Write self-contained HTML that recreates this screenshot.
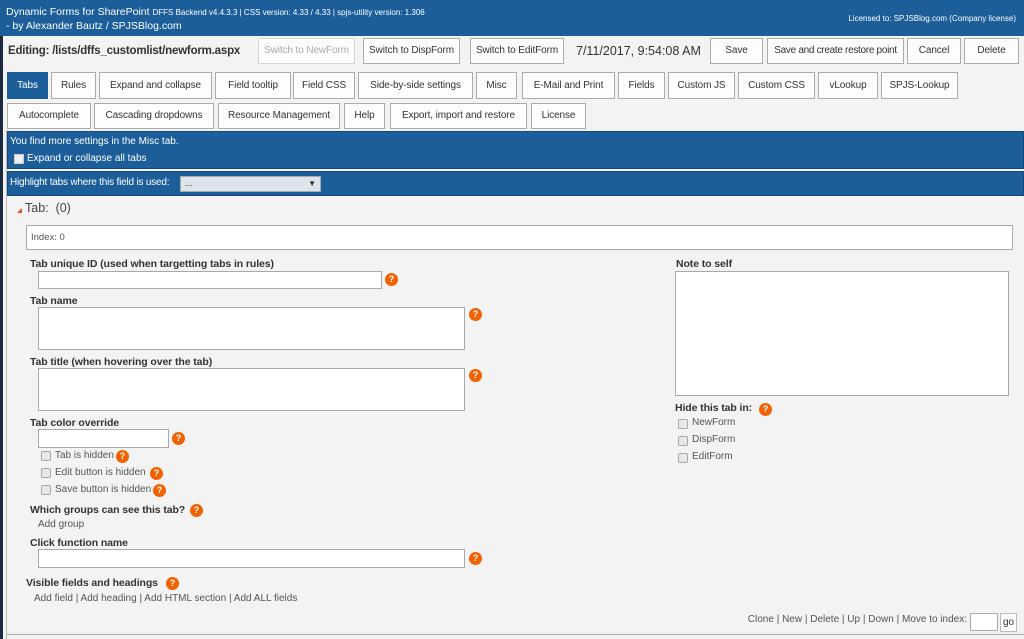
<!DOCTYPE html>
<html><head><style>
*{box-sizing:border-box;margin:0;padding:0}
body{width:1024px;height:639px;overflow:hidden;background:#f3f3f3;font-family:"Liberation Sans",sans-serif;font-size:11px;color:#333;position:relative}
.a{position:absolute;white-space:nowrap}
.hdr{left:0;top:0;width:1024px;height:36px;background:#1b5e99;color:#fff}
.btn{position:absolute;background:#fdfdfd;border:1px solid #ababab;font-size:10px;color:#333;text-align:center;white-space:nowrap;letter-spacing:-0.1px}
.r1{top:38px;height:26px;line-height:24px}
.t1{top:72px;height:27px;line-height:25px}
.t2{top:103px;height:26px;line-height:24px}
.blue{background:#1b5e99;color:#fff}
.lbl{font-weight:bold;font-size:10.5px;color:#333;letter-spacing:-0.1px}
.inp{position:absolute;background:#fff;border:1px solid #a9a9a9}
.q{position:absolute;width:13px;height:13px;border-radius:50%;background:#f26202;color:#fff;font-size:9px;font-weight:bold;text-align:center;line-height:13px}
.cb{position:absolute;width:10px;height:10px;border:1px solid #a8a8a8;background:#e8e8e8;border-radius:2px}
.ct{color:#555;font-size:10px}
</style></head><body>
<div class="a" style="left:0;top:0;width:3px;height:639px;background:#1c2a3d"></div>
<div class="a" style="left:6px;top:130px;width:1px;height:509px;background:#bbb"></div>
<div class="a hdr"></div>
<div class="a" style="left:6px;top:6px;color:#fff;font-size:10.5px">Dynamic Forms for SharePoint <span style="font-size:8px">DFFS Backend v4.4.3.3 | CSS version: 4.33 / 4.33 | spjs-utility version: 1.306</span></div>
<div class="a" style="left:6px;top:20px;color:#fff;font-size:10.5px">- by Alexander Bautz / SPJSBlog.com</div>
<div class="a" style="right:8px;top:14px;color:#fff;font-size:8px">Licensed to: SPJSBlog.com (Company license)</div>

<div class="a" style="left:8px;top:45px;font-weight:bold;font-size:11.5px;color:#333;letter-spacing:-0.2px">Editing: /lists/dffs_customlist/newform.aspx</div>
<div class="btn r1" style="left:258px;width:97px;color:#aaa;border-color:#d5d5d5">Switch to NewForm</div>
<div class="btn r1" style="left:363px;width:97px">Switch to DispForm</div>
<div class="btn r1" style="left:470px;width:94px">Switch to EditForm</div>
<div class="a" style="left:576px;top:44px;font-size:12.5px;color:#333">7/11/2017, 9:54:08 AM</div>
<div class="btn r1" style="left:710px;width:53px">Save</div>
<div class="btn r1" style="left:767px;width:137px;letter-spacing:-0.3px">Save and create restore point</div>
<div class="btn r1" style="left:907px;width:54px">Cancel</div>
<div class="btn r1" style="left:964px;width:55px">Delete</div>

<div class="btn t1 blue" style="left:7px;width:41px;border-color:#1b5e99">Tabs</div>
<div class="btn t1" style="left:51px;width:45px">Rules</div>
<div class="btn t1" style="left:99px;width:113px">Expand and collapse</div>
<div class="btn t1" style="left:215px;width:76px">Field tooltip</div>
<div class="btn t1" style="left:293px;width:62px">Field CSS</div>
<div class="btn t1" style="left:358px;width:115px">Side-by-side settings</div>
<div class="btn t1" style="left:476px;width:41px">Misc</div>
<div class="btn t1" style="left:522px;width:93px">E-Mail and Print</div>
<div class="btn t1" style="left:618px;width:47px">Fields</div>
<div class="btn t1" style="left:668px;width:67px">Custom JS</div>
<div class="btn t1" style="left:738px;width:77px">Custom CSS</div>
<div class="btn t1" style="left:818px;width:60px">vLookup</div>
<div class="btn t1" style="left:881px;width:77px">SPJS-Lookup</div>

<div class="btn t2" style="left:7px;width:84px">Autocomplete</div>
<div class="btn t2" style="left:94px;width:120px">Cascading dropdowns</div>
<div class="btn t2" style="left:218px;width:122px">Resource Management</div>
<div class="btn t2" style="left:344px;width:41px">Help</div>
<div class="btn t2" style="left:390px;width:137px">Export, import and restore</div>
<div class="btn t2" style="left:531px;width:55px">License</div>

<div class="a" style="left:7px;top:131px;width:1017px;height:38px;background:#1b5e99;border:1px solid #14487a"></div>
<div class="a" style="left:10px;top:136px;color:#fff;font-size:10px">You find more settings in the Misc tab.</div>
<div class="a" style="left:14px;top:154px;width:10px;height:10px;background:#eee;border:1px solid #ccc"></div>
<div class="a" style="left:27px;top:153px;color:#fff;font-size:10px">Expand or collapse all tabs</div>
<div class="a" style="left:7px;top:171px;width:1017px;height:25px;background:#1b5e99;border:1px solid #14487a"></div>
<div class="a" style="left:10px;top:177px;color:#fff;font-size:10px;letter-spacing:-0.2px">Highlight tabs where this field is used:</div>
<div class="a" style="left:180px;top:176px;width:141px;height:16px;background:#dde4ec;border:1px solid #aaa;font-size:9px;color:#333;padding-left:4px;line-height:12px">...<span style="position:absolute;right:4px;top:1px;font-size:8px">▼</span></div>

<div class="a" style="left:17px;top:208px;width:0;height:0;border-left:5px solid transparent;border-bottom:5px solid #e0501c"></div>
<div class="a" style="left:25px;top:201px;font-size:12.5px;color:#444">Tab:&nbsp; (0)</div>
<div class="inp" style="left:26px;top:225px;width:987px;height:25px"></div>
<div class="a" style="left:31px;top:232px;font-size:9.5px;color:#555">Index: 0</div>

<div class="a lbl" style="left:30px;top:258px">Tab unique ID (used when targetting tabs in rules)</div>
<div class="inp" style="left:38px;top:271px;width:344px;height:18px"></div>
<div class="q" style="left:385px;top:273px">?</div>
<div class="a lbl" style="left:30px;top:295px">Tab name</div>
<div class="inp" style="left:38px;top:307px;width:427px;height:43px"></div>
<div class="q" style="left:469px;top:308px">?</div>
<div class="a lbl" style="left:30px;top:356px">Tab title (when hovering over the tab)</div>
<div class="inp" style="left:38px;top:368px;width:427px;height:43px"></div>
<div class="q" style="left:469px;top:369px">?</div>
<div class="a lbl" style="left:30px;top:417px">Tab color override</div>
<div class="inp" style="left:38px;top:429px;width:131px;height:19px"></div>
<div class="q" style="left:172px;top:432px">?</div>
<div class="cb" style="left:41px;top:451px"></div><div class="a ct" style="left:55px;top:450px">Tab is hidden</div><div class="q" style="left:116px;top:450px">?</div>
<div class="cb" style="left:41px;top:468px"></div><div class="a ct" style="left:55px;top:467px">Edit button is hidden</div><div class="q" style="left:150px;top:467px">?</div>
<div class="cb" style="left:41px;top:485px"></div><div class="a ct" style="left:55px;top:484px">Save button is hidden</div><div class="q" style="left:153px;top:484px">?</div>
<div class="a lbl" style="left:30px;top:504px">Which groups can see this tab?</div><div class="q" style="left:190px;top:504px">?</div>
<div class="a ct" style="left:38px;top:519px">Add group</div>
<div class="a lbl" style="left:30px;top:537px">Click function name</div>
<div class="inp" style="left:38px;top:549px;width:427px;height:19px"></div>
<div class="q" style="left:469px;top:552px">?</div>
<div class="a lbl" style="left:26px;top:577px">Visible fields and headings</div><div class="q" style="left:166px;top:577px">?</div>
<div class="a ct" style="left:34px;top:593px">Add field | Add heading | Add HTML section | Add ALL fields</div>

<div class="a lbl" style="left:676px;top:258px">Note to self</div>
<div class="inp" style="left:675px;top:271px;width:334px;height:125px"></div>
<div class="a lbl" style="left:675px;top:402px">Hide this tab in:</div><div class="q" style="left:759px;top:403px">?</div>
<div class="cb" style="left:678px;top:419px"></div><div class="a ct" style="left:692px;top:417px">NewForm</div>
<div class="cb" style="left:678px;top:436px"></div><div class="a ct" style="left:692px;top:434px">DispForm</div>
<div class="cb" style="left:678px;top:453px"></div><div class="a ct" style="left:692px;top:451px">EditForm</div>

<div class="a ct" style="right:57px;top:614px">Clone | New | Delete | Up | Down | Move to index:</div>
<div class="inp" style="left:970px;top:613px;width:28px;height:18px"></div>
<div class="a" style="left:1000px;top:613px;width:17px;height:19px;background:#fdfdfd;border:1px solid #bbb;font-size:10px;text-align:center;line-height:17px">go</div>
<div class="a" style="left:7px;top:634px;width:1017px;height:1px;background:#aaa"></div>
</body></html>
